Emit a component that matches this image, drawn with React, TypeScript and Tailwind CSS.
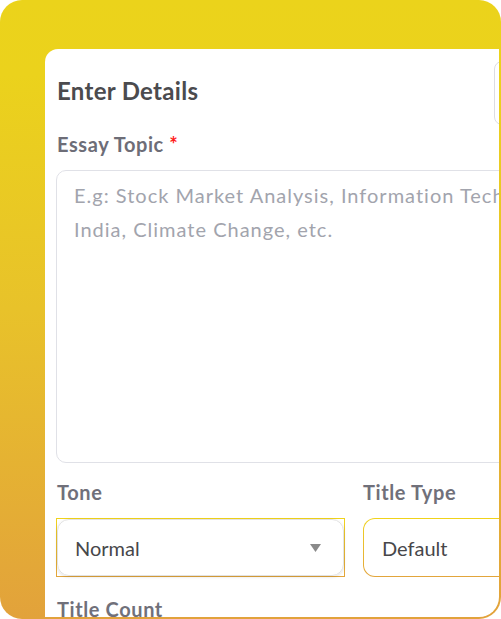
import { useState } from 'react';

const font = { fontFamily: 'Lato, "Liberation Sans", sans-serif' };

function Caret() {
  return (
    <svg className="ml-auto" width="11" height="8" viewBox="0 0 11 8">
      <path d="M0 0 L11 0 L5.5 8 Z" fill="#8a8a8a" />
    </svg>
  );
}

export default function App() {
  const [topic, setTopic] = useState('');

  return (
    <div className="w-[501px] h-[619px] bg-white" style={font}>
      <div className="h-full w-full rounded-[22px] p-[2px] overflow-hidden bg-[linear-gradient(to_bottom,#ebd31b_0%,#ebd21c_12%,#e8c22a_50%,#e2a23b_100%)]">
        <div className="h-full w-full rounded-[20px] overflow-hidden pl-[43px] pt-[47px]">
          <div className="w-[620px] min-h-[700px] bg-white rounded-tl-[13px] pt-3 pl-3">
            <div className="flex items-center justify-between w-[595px] h-16">
              <h2 className="mt-[-4px] text-[24px] font-bold text-[#4b4b4e] tracking-[0.3px]">Enter Details</h2>
              <div className="w-[158px] h-16 rounded-lg border border-[#dcdce2]" />
            </div>

            <label className="block mt-[7px] text-[20px] font-bold text-[#6d6d77] leading-6 tracking-[0.6px]">
              Essay Topic <span className="text-[#ff1a1a]">*</span>
            </label>
            <textarea
              value={topic}
              onChange={(e) => setTopic(e.target.value)}
              placeholder="E.g: Stock Market Analysis, Information Technology in India, Climate Change, etc."
              className="block mt-[14px] -ml-px w-[595px] h-[293px] resize-none rounded-[10px] border border-[#e0e1e7] px-[17px] py-[7px] text-[20px] leading-[34px] tracking-[1px] text-[#4a4a4a] placeholder:text-[#a2a4ad] outline-none"
            />

            <div className="grid grid-cols-[289px_289px] gap-[18px] mt-[17px] -ml-px">
              <div>
                <div className="ml-px text-[20px] font-bold text-[#70707a] leading-6 tracking-[0.6px]">Tone</div>
                <div className="mt-[14px] p-px bg-gradient-to-b from-[#f0d31a] to-[#e2a53c]">
                  <div className="bg-white">
                    <div className="h-[57px] rounded-[12px] border border-[#e2e2e2] shadow-[0_1px_3px_rgba(0,0,0,0.12)] flex items-center pl-[17px] pr-[22px]">
                      <span className="text-[20px] text-[#47474a]">Normal</span>
                      <Caret />
                    </div>
                  </div>
                </div>
              </div>
              <div>
                <div className="text-[20px] font-bold text-[#70707a] leading-6 tracking-[0.6px]">Title Type</div>
                <div className="mt-[14px] rounded-[12px] p-px bg-gradient-to-b from-[#f0d31a] to-[#e2a53c]">
                  <div className="h-[57px] rounded-[11px] bg-white flex items-center pl-[18px] pr-[22px]">
                    <span className="text-[20px] text-[#47474a]">Default</span>
                    <Caret />
                  </div>
                </div>
              </div>
            </div>

            <div className="mt-[20px] text-[20px] font-bold text-[#70707a] leading-6 tracking-[0.6px]">Title Count</div>
          </div>
        </div>
      </div>
    </div>
  );
}
